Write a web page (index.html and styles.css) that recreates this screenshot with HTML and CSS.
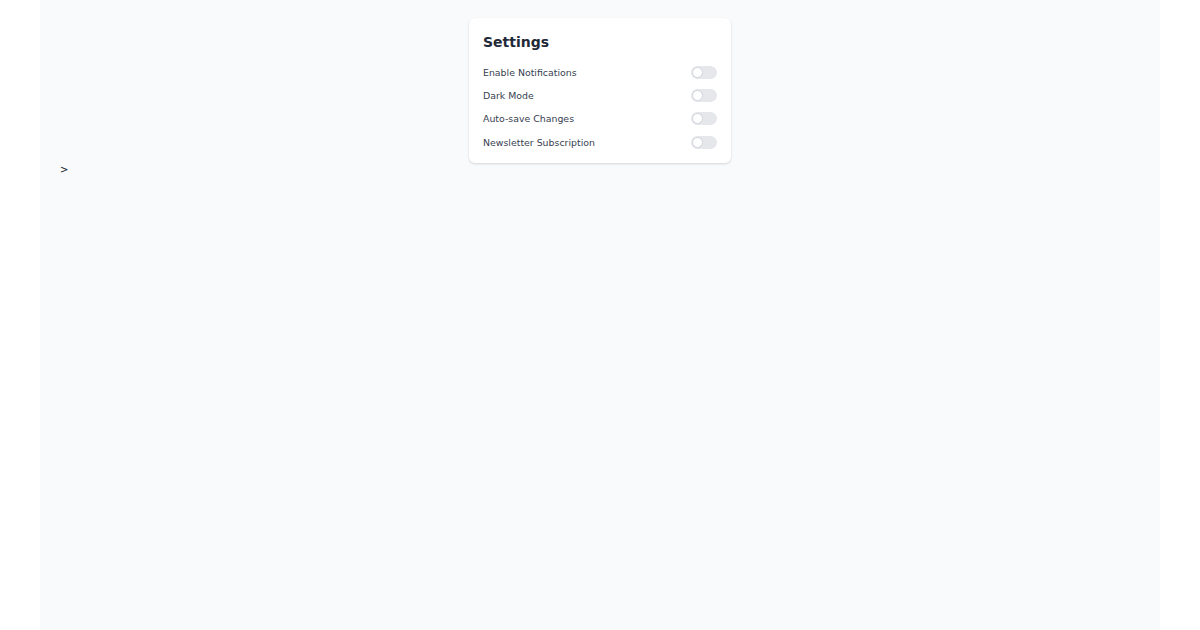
FILE: index.html
```html
<!DOCTYPE html>
<html>
<head>
<meta charset="utf-8">
<link rel="stylesheet" href="styles.css">
</head>
<body>
<div class="page">
  <div class="card">
    <h2 class="title">Settings</h2>
    <div class="rows">
      <div class="row"><span class="label">Enable Notifications</span><span class="toggle"><span class="knob"></span></span></div>
      <div class="row"><span class="label">Dark Mode</span><span class="toggle"><span class="knob"></span></span></div>
      <div class="row"><span class="label">Auto-save Changes</span><span class="toggle"><span class="knob"></span></span></div>
      <div class="row"><span class="label">Newsletter Subscription</span><span class="toggle"><span class="knob"></span></span></div>
    </div>
  </div>
  <div class="stray">&gt;</div>
</div>
</body>
</html>
```
FILE: styles.css
```css
html, body {
  margin: 0;
  padding: 0;
  background: #ffffff;
  font-family: "DejaVu Sans", sans-serif;
}
.page {
  width: 1120px;
  margin: 0 auto;
  min-height: 630px;
  box-sizing: border-box;
  background: #f9fafb;
  padding: 18px 20px 0;
}
.card {
  width: 262px;
  box-sizing: border-box;
  margin: 0 auto;
  background: #ffffff;
  border-radius: 6px;
  padding: 14px 14px 14.5px;
  box-shadow: 0 1px 3px rgba(0,0,0,0.10), 0 1px 2px rgba(0,0,0,0.06);
}
.title {
  margin: 0 0 13.5px;
  font-size: 14px;
  line-height: 20px;
  font-weight: bold;
  color: #1f2937;
}
.rows {
  display: flex;
  flex-direction: column;
  gap: 10.4px;
}
.row {
  display: flex;
  align-items: center;
  justify-content: space-between;
  height: 13px;
}
.label {
  font-size: 9.4px;
  color: #374151;
  line-height: 13px;
}
.toggle {
  width: 26px;
  height: 13px;
  border-radius: 7px;
  background: #e5e7eb;
  display: flex;
  align-items: center;
  padding: 0 1px;
  box-sizing: border-box;
}
.knob {
  width: 11px;
  height: 11px;
  border-radius: 50%;
  background: #ffffff;
  border: 1px solid #d1d5db;
  box-sizing: border-box;
}
.stray {
  font-size: 10px;
  line-height: 14px;
  color: #111827;
}
```
